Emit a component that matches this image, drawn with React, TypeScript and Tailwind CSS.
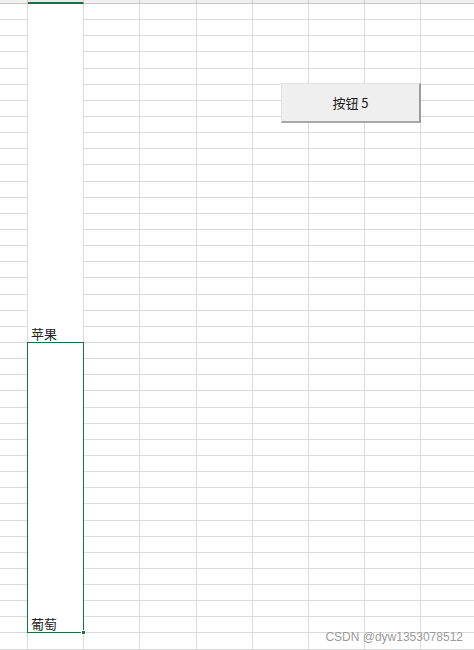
import React from "react";

const ROWS = 40;
const COLS = 9;
const headers = ["", "B", "C", "D", "E", "F", "G", "H", "I"];

export default function App() {
  const cells: React.ReactNode[] = [];
  for (let r = 1; r <= ROWS; r++) {
    for (let c = 0; c < COLS; c++) {
      if (c === 1) {
        if (r === 1) {
          cells.push(
            <div
              key={`${r}-${c}`}
              className="row-span-21 flex items-end border-r border-b border-[#dadada] bg-white pl-[3px]"
            >
              <span className="text-[13px] leading-[16px] text-[#222]">苹果</span>
            </div>
          );
          continue;
        }
        if (r <= 21) continue;
        if (r === 22) {
          cells.push(
            <div
              key={`${r}-${c}`}
              className="relative row-span-18 flex items-end border-r border-b border-[#dadada] bg-white pl-[3px]"
            >
              <span className="text-[13px] leading-[16px] text-[#222]">葡萄</span>
              <div className="pointer-events-none absolute -top-px -left-px -right-px -bottom-px border border-[#1f6e43]" />
              <div className="absolute -right-[3px] -bottom-[3px] h-[5px] w-[5px] border border-white bg-[#1f6e43]" />
            </div>
          );
          continue;
        }
        if (r <= 39) continue;
      }
      cells.push(
        <div key={`${r}-${c}`} className="border-r border-b border-[#dadada] bg-white" />
      );
    }
  }

  return (
    <div
      className="relative h-[650px] w-[474px] overflow-hidden bg-white"
      style={{ fontFamily: '"Noto Sans CJK SC", "Noto Sans", sans-serif' }}
    >
      <div className="grid grid-cols-[28px_repeat(8,56.2px)]">
        {headers.map((h, i) => (
          <div
            key={i}
            className={
              i === 1
                ? "flex h-[4px] items-end justify-center overflow-hidden border-r border-[#d0d0d0] bg-[#e8e8e8] border-b-2 border-b-[#1f6e43]"
                : "flex h-[4px] items-end justify-center overflow-hidden border-r border-b border-[#c8c8c8] bg-[#f0f0f0]"
            }
          >
            <span className="translate-y-[9px] text-[11px] leading-[12px] text-[#9a9a9a]">{h}</span>
          </div>
        ))}
      </div>
      <div className="grid grid-cols-[28px_repeat(8,56.2px)] auto-rows-[16.15px]">{cells}</div>

      <div className="absolute left-[281px] top-[83px] flex h-[40px] w-[140px] items-center justify-center border-t border-l border-[#e2e2e2] border-r-2 border-b-2 border-r-[#9c9c9c] border-b-[#a8a8a8] bg-[#efefef]">
        <span className="text-[13px] leading-[16px] text-[#1a1a1a]">按钮 5</span>
      </div>

      <div
        className="absolute right-[11px] bottom-[6px] text-[12px] leading-[14px] text-[#9a9a9a]"
        style={{ fontFamily: '"Liberation Sans", Arial, sans-serif' }}
      >
        CSDN @dyw1353078512
      </div>
    </div>
  );
}
